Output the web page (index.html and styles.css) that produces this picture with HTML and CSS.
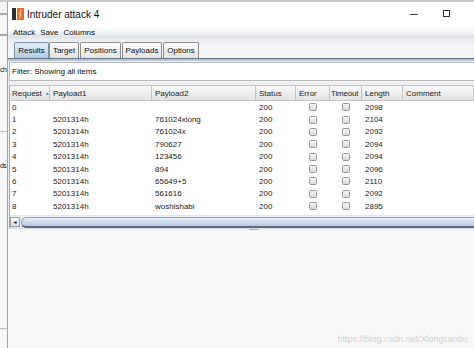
FILE: index.html
```html
<!DOCTYPE html>
<html>
<head>
<meta charset="utf-8">
<link rel="stylesheet" href="styles.css">
</head>
<body>
<div class="screen">
  <div class="bgwin">
    <div class="bl thick first"></div>
    <div class="bl thick second"></div>
    <div class="bt t1">ch</div>
    <div class="bl thin third"></div>
    <div class="bt t2">ds</div>
    <div class="bl thin fourth"></div>
  </div>
  <div class="win">
    <div class="titlebar">
      <svg class="appicon" width="12" height="12" viewBox="0 0 12 12">
        <rect x="0" y="0" width="4" height="12" fill="#2e2e2e"/>
        <rect x="5" y="0" width="7" height="12" fill="#ec6a24"/>
        <path d="M9.5 1.5 L7 6 L9 6 L7.5 10.5" fill="none" stroke="#fbd2b8" stroke-width="1"/>
      </svg>
      <span class="title">Intruder attack 4</span>
      <span class="spacer"></span>
      <span class="minbtn"></span>
      <span class="maxbtn"></span>
    </div>
    <div class="menubar"><span>Attack</span><span>Save</span><span>Columns</span></div>
    <div class="tabs">
      <div class="tab sel w-results">Results</div>
      <div class="tab w-target">Target</div>
      <div class="tab w-positions">Positions</div>
      <div class="tab w-payloads">Payloads</div>
      <div class="tab w-options">Options</div>
    </div>
    <div class="panel">
      <div class="filter">Filter: Showing all items</div>
      <div class="table">
        <div class="row head">
          <div class="c first">Request<span class="sort">▲</span></div>
          <div class="c">Payload1</div>
          <div class="c">Payload2</div>
          <div class="c">Status</div>
          <div class="c">Error</div>
          <div class="c tight">Timeout</div>
          <div class="c">Length</div>
          <div class="c">Comment</div>
        </div>
        <div class="tbody">
          <div class="row"><div class="c first">0</div><div class="c"></div><div class="c"></div><div class="c">200</div><div class="c cb"><i></i></div><div class="c cb"><i></i></div><div class="c">2098</div><div class="c"></div></div>
          <div class="row"><div class="c first">1</div><div class="c">5201314h</div><div class="c">761024xiong</div><div class="c">200</div><div class="c cb"><i></i></div><div class="c cb"><i></i></div><div class="c">2104</div><div class="c"></div></div>
          <div class="row"><div class="c first">2</div><div class="c">5201314h</div><div class="c">761024x</div><div class="c">200</div><div class="c cb"><i></i></div><div class="c cb"><i></i></div><div class="c">2092</div><div class="c"></div></div>
          <div class="row"><div class="c first">3</div><div class="c">5201314h</div><div class="c">790627</div><div class="c">200</div><div class="c cb"><i></i></div><div class="c cb"><i></i></div><div class="c">2094</div><div class="c"></div></div>
          <div class="row"><div class="c first">4</div><div class="c">5201314h</div><div class="c">123456</div><div class="c">200</div><div class="c cb"><i></i></div><div class="c cb"><i></i></div><div class="c">2094</div><div class="c"></div></div>
          <div class="row"><div class="c first">5</div><div class="c">5201314h</div><div class="c">894</div><div class="c">200</div><div class="c cb"><i></i></div><div class="c cb"><i></i></div><div class="c">2096</div><div class="c"></div></div>
          <div class="row"><div class="c first">6</div><div class="c">5201314h</div><div class="c">65649+5</div><div class="c">200</div><div class="c cb"><i></i></div><div class="c cb"><i></i></div><div class="c">2110</div><div class="c"></div></div>
          <div class="row"><div class="c first">7</div><div class="c">5201314h</div><div class="c">561616</div><div class="c">200</div><div class="c cb"><i></i></div><div class="c cb"><i></i></div><div class="c">2092</div><div class="c"></div></div>
          <div class="row"><div class="c first">8</div><div class="c">5201314h</div><div class="c">woshishabi</div><div class="c">200</div><div class="c cb"><i></i></div><div class="c cb"><i></i></div><div class="c">2895</div><div class="c"></div></div>
        </div>
        <div class="hscroll">
          <div class="sbtn">◄</div>
          <div class="thumb"></div>
        </div>
      </div>
      <div class="divider"><span class="grip"></span></div>
      <div class="lower"><span class="wm">https://blog.csdn.net/Xlongcanbu</span></div>
    </div>
  </div>
</div>
</body>
</html>
```
FILE: styles.css
```css
* { box-sizing: border-box; }
html, body { margin: 0; padding: 0; }
body {
  width: 474px;
  height: 348px;
  overflow: hidden;
  background: #fff;
  font-family: "Liberation Sans", Arial, sans-serif;
  font-size: 8px;
  color: #1a1a1a;
}
.screen {
  display: flex;
  width: 474px;
  height: 348px;
  border-top: 2px solid #c9c9c9;
}
.bgwin {
  width: 7px;
  flex: none;
  display: flex;
  flex-direction: column;
  background: #f6f6f6;
  overflow: hidden;
}
.bl { flex: none; }
.bl.thick { height: 2px; background: #a9a9a9; }
.bl.thin { height: 1px; background: #bdbdbd; }
.bl.first { margin-top: 11px; }
.bl.second { margin-top: 19px; }
.bl.third { margin-top: 56px; }
.bl.fourth { margin-top: 157px; }
.bt {
  flex: none;
  height: 10px;
  line-height: 10px;
  font-size: 7px;
  letter-spacing: -0.6px;
  white-space: nowrap;
  color: #222;
}
.bt.t1 { margin-top: 29px; }
.bt.t2 { margin-top: 29px; }

.win {
  flex: 1;
  display: flex;
  flex-direction: column;
  border-left: 1px solid #a3a3a3;
  background: #fff;
  min-width: 0;
}
.titlebar {
  height: 24px;
  flex: none;
  display: flex;
  align-items: center;
  padding-left: 4px;
  background: #fff;
}
.appicon { flex: none; }
.title {
  margin-left: 3px;
  font-size: 10px;
  color: #111;
}
.spacer { flex: 1; }
.minbtn {
  width: 8px;
  height: 1px;
  background: #444;
  margin-right: 25px;
  margin-top: 1px;
}
.maxbtn {
  width: 7px;
  height: 7px;
  border: 1px solid #333;
  margin-right: 24px;
  margin-top: -2px;
}
.menubar {
  height: 12px;
  flex: none;
  display: flex;
  align-items: center;
  gap: 5px;
  padding-left: 5px;
  background: linear-gradient(#ffffff 0%, #f6f7f8 40%, #dde2e6 100%);
  color: #111;
}
.tabs {
  height: 21px;
  flex: none;
  display: flex;
  align-items: flex-end;
  padding-left: 6px;
  background: linear-gradient(#e6eaed, #f4f5f6 40%, #f4f5f6);
  border-bottom: 1px solid #66788a;
}
.tab {
  height: 16px;
  display: flex;
  align-items: center;
  justify-content: center;
  border: 1px solid #8e8e8e;
  border-bottom: none;
  border-radius: 2px 2px 0 0;
  background: linear-gradient(#fdfdfd, #e3e3e3);
  color: #111;
  margin-right: 1px;
}
.tab.sel {
  background: linear-gradient(#e3edf6, #b3cbe1);
  border-color: #7990a6;
  margin-right: 0;
}
.w-results { width: 35px; }
.w-target { width: 30px; }
.w-positions { width: 41px; }
.w-payloads { width: 40px; }
.w-options { width: 36px; }

.panel {
  flex: 1;
  display: flex;
  flex-direction: column;
  background: #eff1f3;
  border-top: 2px solid #b7c4d0;
  min-height: 0;
}
.filter {
  flex: none;
  height: 19px;
  margin: 1px 0 0 1px;
  display: flex;
  align-items: center;
  padding-left: 2px;
  background: #fff;
  border: 1px solid #b9b9b9;
  border-right: none;
  color: #111;
}
.table {
  flex: none;
  margin: 4px 0 0 1px;
  border-left: 1px solid #a6a6a6;
  border-top: 1px solid #c4c4c4;
  background: #fff;
  display: flex;
  flex-direction: column;
}
.row {
  display: grid;
  grid-template-columns: 40px 102px 104px 40px 34px 32px 41px 1fr;
  height: 12.375px;
  align-items: center;
}
.row.head {
  height: 15px;
  background: linear-gradient(#f9f9f9, #e3e3e3);
  border-bottom: 1px solid #c9c9c9;
  color: #222;
}
.row.head .c {
  height: 100%;
  display: flex;
  align-items: center;
  border-right: 1px solid #c3c3c3;
}
.c {
  padding-left: 3px;
  white-space: nowrap;
  overflow: hidden;
}
.c.first { padding-left: 2px; }
.row.head .c.tight {
  padding-left: 1px;
  letter-spacing: -0.2px;
}
.sort {
  font-size: 5px;
  color: #5f8fc0;
  margin-left: 3px;
}
.tbody {
  background: #fff;
  padding-bottom: 3px;
}
.tbody .row { color: #1c1c1c; }
.c.cb {
  display: flex;
  justify-content: center;
  padding-left: 0;
}
.c.cb i {
  display: block;
  width: 8px;
  height: 8px;
  border: 1px solid #989898;
  border-radius: 1.5px;
  background: linear-gradient(#f6f6f6, #d9d9d9);
}
.hscroll {
  height: 13px;
  display: flex;
  align-items: center;
  background: linear-gradient(#edf2f6, #d5e1ec);
  border-top: 1px solid #e0e6eb;
}
.sbtn {
  flex: none;
  width: 10px;
  height: 10px;
  border: 1px solid #9aa3ab;
  background: linear-gradient(#f7f7f7, #dcdcdc);
  font-size: 5px;
  line-height: 8px;
  text-align: center;
  color: #222;
}
.thumb {
  flex: 1;
  height: 11px;
  margin-left: 1px;
  border: 1px solid #8ea3b6;
  border-right: none;
  border-bottom: 2px solid #5b6e80;
  border-radius: 6px 0 0 6px;
  background: linear-gradient(#eaf1f7, #c8d9e8 60%, #b6cadd);
}
.divider {
  flex: none;
  height: 2px;
  display: flex;
  background: #f3f3f3;
  border-top: 1px solid #d8dde2;
}
.grip {
  display: block;
  width: 10px;
  height: 1px;
  background: #b3b3b3;
  margin-left: 241px;
}
.lower {
  flex: 1;
  display: flex;
  align-items: flex-end;
  justify-content: flex-end;
  padding: 0 6px 4px 0;
  background: #f8f8f8;
}
.wm {
  font-size: 9px;
  color: #d2d2d2;
}
```
